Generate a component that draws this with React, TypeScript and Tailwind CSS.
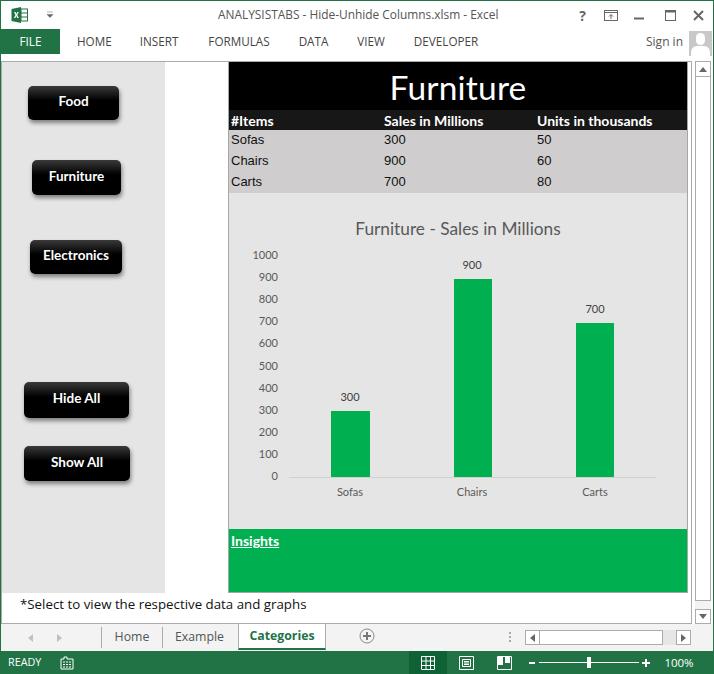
import React from "react";

const ui = "font-['Open_Sans','Noto_Sans',sans-serif]";
const calibri = "font-['Lato','Carlito',sans-serif]";

function ExcelLogo() {
  return (
    <svg width="17" height="16" viewBox="0 0 17 16">
      <rect x="6" y="2" width="10.5" height="12" fill="#fff" stroke="#217346" />
      <path d="M10 2v12M6 6h10M6 10h10" stroke="#217346" strokeWidth="1" />
      <path d="M0.5 2 L10 0 V16 L0.5 14 Z" fill="#217346" />
      <path d="M3 5 L4.6 5 L5.4 7 L6.3 5 L7.8 5 L6.2 8 L7.9 11 L6.3 11 L5.3 9 L4.4 11 L2.9 11 L4.5 8 Z" fill="#fff" />
    </svg>
  );
}

function Btn({ label, className }: { label: string; className: string }) {
  return (
    <div
      className={`flex items-start justify-center rounded-[5px] bg-[linear-gradient(#3a3a3a_0%,#000_42%,#000_100%)] shadow-[1px_3px_4px_rgba(0,0,0,0.45)] text-[13.5px] leading-[20px] font-bold text-white ${calibri} ${className}`}
    >
      {label}
    </div>
  );
}

function Chart() {
  const ticks = [0, 100, 200, 300, 400, 500, 600, 700, 800, 900, 1000];
  const bars = [
    { x: 102, w: 39, v: 300, n: "Sofas", cx: 121 },
    { x: 225, w: 38, v: 900, n: "Chairs", cx: 243 },
    { x: 347, w: 38, v: 700, n: "Carts", cx: 366 },
  ];
  const base = 284;
  return (
    <svg width="458" height="336" viewBox="0 0 458 336" className="block">
      <text x="229" y="42" textAnchor="middle" fontSize="17.3" fill="#595959" fontFamily="Lato, sans-serif">
        Furniture - Sales in Millions
      </text>
      {ticks.map((t) => (
        <text key={t} x="49" y={base - (t / 100) * 22.1 + 3} textAnchor="end" fontSize="11" fill="#595959" fontFamily="Lato, sans-serif">
          {t}
        </text>
      ))}
      <line x1="60" x2="427" y1={base + 0.5} y2={base + 0.5} stroke="#d0d0d0" />
      {bars.map((b) => {
        const h = (b.v / 100) * 22;
        return (
          <g key={b.n}>
            <rect x={b.x} y={base - h} width={b.w} height={h} fill="#00b050" />
            <text x={b.cx} y={base - h - 10} textAnchor="middle" fontSize="11" fill="#404040" fontFamily="Lato, sans-serif">
              {b.v}
            </text>
            <text x={b.cx} y={base + 19} textAnchor="middle" fontSize="11" fill="#595959" fontFamily="Lato, sans-serif">
              {b.n}
            </text>
          </g>
        );
      })}
    </svg>
  );
}

function Row({ a, b, c }: { a: string; b: string; c: string }) {
  return (
    <div className="flex h-[21px] items-center pb-[2px] text-[13px] text-[#111] font-['Liberation_Sans',sans-serif]">
      <div className="w-[153px] pl-[2px]">{a}</div>
      <div className="w-[153px] pl-[2px]">{b}</div>
      <div className="pl-[2px]">{c}</div>
    </div>
  );
}

export default function App() {
  return (
    <div className={`flex h-[674px] w-[714px] flex-col overflow-hidden border-x border-t border-[#217346] bg-white ${ui}`}>
      {/* title */}
      <div className="flex h-[28px] shrink-0 items-center text-[#444]">
        <div className="ml-[10px] mt-[-1px] flex"><ExcelLogo /></div>
        <svg width="8" height="8" viewBox="0 0 8 8" className="ml-[18px]">
          <path d="M1 1h6M1 3.5h6l-3 3z" fill="#666" stroke="#666" strokeWidth="0.5" />
        </svg>
        <div className="ml-[164px] whitespace-nowrap text-[11.9px] text-[#555]">ANALYSISTABS - Hide-Unhide Columns.xlsm - Excel</div>
        <div className="ml-auto mr-[9px] flex items-center">
          <span className="mr-[18px] text-[14px] font-bold text-[#666]">?</span>
          <svg width="14" height="11" viewBox="0 0 14 11" className="mr-[16px]">
            <rect x="0.5" y="0.5" width="13" height="10" fill="none" stroke="#666" />
            <path d="M1 2.5h12M7 9V4.5M5 6.5l2-2 2 2" fill="none" stroke="#666" />
          </svg>
          <svg width="10" height="10" viewBox="0 0 10 10" className="mr-[21px]"><path d="M0 8.5h10" stroke="#666" strokeWidth="2" /></svg>
          <svg width="11" height="11" viewBox="0 0 11 11" className="mr-[17px]"><rect x="0.5" y="0.5" width="10" height="10" fill="none" stroke="#666" /><path d="M0 1.5h11" stroke="#666" strokeWidth="2" /></svg>
          <svg width="11" height="11" viewBox="0 0 11 11"><path d="M1 1l9 9M10 1l-9 9" stroke="#666" strokeWidth="2" /></svg>
        </div>
      </div>
      {/* ribbon tabs */}
      <div className="flex h-[25px] shrink-0 items-center text-[11.7px] text-[#444]">
        <div className="flex h-full w-[59px] items-center justify-center bg-[#217346] text-white">FILE</div>
        <div className="ml-[17px]">HOME</div>
        <div className="ml-[28px]">INSERT</div>
        <div className="ml-[30px]">FORMULAS</div>
        <div className="ml-[29px]">DATA</div>
        <div className="ml-[29px]">VIEW</div>
        <div className="ml-[29px]">DEVELOPER</div>
        <div className="ml-auto mr-[6px] text-[12px] text-[#555]">Sign in</div>
        <div className="mr-[1px] relative mt-[3px] h-[25px] w-[23px] overflow-hidden bg-[#c8c8c8]">
          <div className="mx-auto mt-[2px] h-[12px] w-[9px] rounded-full bg-white" />
          <div className="mx-auto mt-[1px] h-[10px] w-[19px] rounded-t-[6px] bg-white" />
        </div>
      </div>
      <div className="h-[7px] shrink-0" />
      {/* sheet + scrollbar */}
      <div className="flex min-h-0 flex-1">
        <div className="flex w-[691px] shrink-0 flex-col border border-[#ababab]">
          <div className="flex h-[531px] shrink-0">
            <div className="flex w-[163px] shrink-0 flex-col bg-[#e5e5e5]">
              <Btn label="Food" className="ml-[26px] mt-[24px] h-[34px] w-[91px] pt-[5px]" />
              <Btn label="Furniture" className="ml-[30px] mt-[40px] h-[35px] w-[89px] pt-[6px]" />
              <Btn label="Electronics" className="ml-[28px] mt-[45px] h-[34px] w-[92px] pt-[5px]" />
              <Btn label="Hide All" className="ml-[22px] mt-[108px] h-[36px] w-[105px] pt-[6px]" />
              <Btn label="Show All" className="ml-[22px] mt-[28px] h-[35px] w-[106px] pt-[6px]" />
            </div>
            <div className="w-[63px] shrink-0" />
            <div className={`flex w-[460px] shrink-0 flex-col border-x border-b border-[#a6a6a6] ${calibri}`}>
              <div className="flex h-[48px] shrink-0 items-center justify-center bg-black pt-[3px] text-[33.5px] tracking-[0.2px] text-white">Furniture</div>
              <div className="flex h-[20px] shrink-0 items-center bg-[#171717] text-[14px] font-bold text-white">
                <div className="w-[153px] pl-[2px]">#Items</div>
                <div className="w-[153px] pl-[2px]">Sales in Millions</div>
                <div className="pl-[2px]">Units in thousands</div>
              </div>
              <div className="shrink-0 bg-[#cfcdcd]">
                <Row a="Sofas" b="300" c="50" />
                <Row a="Chairs" b="900" c="60" />
                <Row a="Carts" b="700" c="80" />
              </div>
              <div className="h-[336px] shrink-0 bg-[#e5e5e5]"><Chart /></div>
              <div className="flex-1 bg-[#00b050] pl-[2px] pt-[3px] text-[14px] font-bold leading-[18px] text-white"><span className="underline">Insights</span></div>
            </div>
          </div>
          <div className="pl-[18px] pt-[1px] text-[13.3px] leading-[20px] text-[#111]">*Select to view the respective data and graphs</div>
        </div>
        <div className="ml-[3px] flex w-[16px] shrink-0 flex-col bg-[#f3f3f3]">
          <div className="flex h-[16px] items-center justify-center border border-[#ababab] bg-white">
            <svg width="8" height="5" viewBox="0 0 8 5"><path d="M4 0l4 5H0z" fill="#666" /></svg>
          </div>
          <div className="h-[524px] border-x border-b border-[#ababab] bg-white" />
          <div className="mt-auto flex h-[15px] items-center justify-center border border-[#ababab] bg-white">
            <svg width="8" height="5" viewBox="0 0 8 5"><path d="M4 5L8 0H0z" fill="#666" /></svg>
          </div>
        </div>
      </div>
      {/* sheet tabs */}
      <div className="flex h-[27px] shrink-0 items-stretch bg-[#f3f3f3] text-[12.3px] text-[#555]">
        <div className="flex w-[101px] shrink-0 items-center border-r border-[#ababab] my-[3px]">
          <svg width="5" height="8" viewBox="0 0 5 8" className="ml-[27px]"><path d="M5 0L0 4l5 4z" fill="#c0c0c0" /></svg>
          <svg width="5" height="8" viewBox="0 0 5 8" className="ml-[24px]"><path d="M0 0l5 4-5 4z" fill="#c0c0c0" /></svg>
        </div>
        <div className="my-[3px] flex w-[61px] items-center justify-center border-r border-[#ababab]">Home</div>
        <div className="my-[3px] flex w-[75px] items-center justify-center pr-[2px]">Example</div>
        <div className="mb-[1px] flex w-[88px] items-center justify-center border-x border-b-2 border-[#ababab] border-b-[#217346] bg-white font-bold text-[#217346]">Categories</div>
        <svg width="16" height="16" viewBox="0 0 16 16" className="ml-[33px] mt-[4px]">
          <circle cx="8" cy="8" r="7" fill="none" stroke="#8a8a8a" />
          <path d="M8 4v8M4 8h8" stroke="#777" strokeWidth="2" />
        </svg>
        <div className="ml-[134px] mt-[8px] flex flex-col gap-[2px]">
          <div className="h-[2px] w-[2px] bg-[#aaa]" /><div className="h-[2px] w-[2px] bg-[#aaa]" /><div className="h-[2px] w-[2px] bg-[#aaa]" />
        </div>
        <div className="ml-[14px] mt-[6px] flex h-[15px] w-[166px] items-stretch">
          <div className="flex w-[15px] items-center justify-center border border-[#ababab] bg-white">
            <svg width="5" height="8" viewBox="0 0 5 8"><path d="M5 0L0 4l5 4z" fill="#666" /></svg>
          </div>
          <div className="w-[123px] border-y border-r border-[#ababab] bg-white" />
          <div className="flex-1 bg-[#e6e6e6]" />
          <div className="flex w-[15px] items-center justify-center border border-[#ababab] bg-white">
            <svg width="5" height="8" viewBox="0 0 5 8"><path d="M0 0l5 4-5 4z" fill="#666" /></svg>
          </div>
        </div>
      </div>
      {/* status */}
      <div className="flex h-[23px] shrink-0 items-center bg-[#217346] text-[12px] text-white">
        <div className="ml-[7px] text-[10.8px]">READY</div>
        <svg width="14" height="14" viewBox="0 0 14 14" className="ml-[19px]">
          <path d="M1 3h3V1h3v2h6v10H1z" fill="none" stroke="#fff" />
          <path d="M3 6h8M3 8.5h8M3 11h8" stroke="#fff" strokeDasharray="2 1" />
        </svg>
        <div className="ml-[335px] flex h-full w-[38px] items-center justify-center bg-[#0f6236]">
          <svg width="14" height="14" viewBox="0 0 14 14"><path d="M.5 .5h13v13H.5zM.5 5h13M.5 9.5h13M5 .5v13M9.5 .5v13" fill="none" stroke="#fff" /></svg>
        </div>
        <svg width="15" height="14" viewBox="0 0 15 14" className="ml-[12px]"><path d="M.5 .5h14v13H.5z" fill="none" stroke="#fff" /><path d="M3.5 3.5h8v7h-8zM5 5.5h5M5 7h5M5 8.5h5" fill="none" stroke="#fff" /></svg>
        <svg width="15" height="14" viewBox="0 0 15 14" className="ml-[23px]"><path d="M.5 .5h14v13H.5z" fill="none" stroke="#fff" /><path d="M1 1h5v8H1zM8 1h5v6H8z" fill="#fff" /></svg>
        <svg width="6" height="2" viewBox="0 0 6 2" className="ml-[17px]"><rect width="6" height="2" fill="#fff" /></svg>
        <div className="relative ml-[4px] h-px w-[100px] bg-white">
          <div className="absolute left-[48px] top-[-5px] h-[11px] w-[4px] bg-white" />
        </div>
        <svg width="8" height="8" viewBox="0 0 8 8" className="ml-[3px]"><path d="M0 4h8M4 0v8" stroke="#fff" strokeWidth="2" /></svg>
        <div className="ml-[14px] text-[11.5px]">100%</div>
      </div>
    </div>
  );
}
